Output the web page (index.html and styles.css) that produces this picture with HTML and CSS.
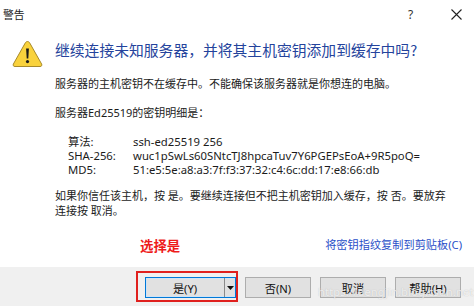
FILE: index.html
```html
<!DOCTYPE html>
<html lang="zh-CN">
<head>
<meta charset="utf-8">
<title>警告</title>
<link rel="stylesheet" href="styles.css">
</head>
<body>
<div class="dialog">
  <div class="titlebar">
    <span class="title">警告</span>
    <span class="tb-help">?</span>
    <span class="tb-close">
      <svg width="11" height="11" viewBox="0 0 11 11"><path d="M0.5 0.5 L10.5 10.5 M10.5 0.5 L0.5 10.5" stroke="#222" stroke-width="1.1" fill="none"/></svg>
    </span>
  </div>
  <div class="content">
    <div class="icon">
      <svg width="31" height="28" viewBox="0 0 31 28">
        <path d="M15.5 1.5 C16.6 1.5 17.2 2.1 17.8 3.1 L29.6 24 C30.3 25.4 29.6 26.5 28 26.5 L3 26.5 C1.4 26.5 0.7 25.4 1.4 24 L13.2 3.1 C13.8 2.1 14.4 1.5 15.5 1.5 Z" fill="#f9d23c" stroke="#a88a2a" stroke-width="1"/>
        <path d="M14.1 8.5 L16.9 8.5 L16.3 18.5 L14.7 18.5 Z" fill="#1a1a1a"/>
        <circle cx="15.5" cy="21.6" r="1.6" fill="#1a1a1a"/>
      </svg>
    </div>
    <div class="text">
      <div class="heading">继续连接未知服务器，并将其主机密钥添加到缓存中吗?</div>
      <div class="line l1">服务器的主机密钥不在缓存中。不能确保该服务器就是你想连的电脑。</div>
      <div class="line l2">服务器Ed25519的密钥明细是：</div>
      <div class="details">
        <span>算法:</span><span>ssh-ed25519 256</span>
        <span>SHA-256:</span><span>wuc1pSwLs60SNtcTJ8hpcaTuv7Y6PGEPsEoA+9R5poQ=</span>
        <span>MD5:</span><span>51:e5:5e:a8:a3:7f:f3:37:32:c4:6c:dd:17:e8:66:db</span>
      </div>
      <div class="para">如果你信任该主机，按 是。要继续连接但不把主机密钥加入缓存，按 否。要放弃<br>连接按 取消。</div>
    </div>
  </div>
  <div class="footer-row">
    <span class="note">选择是</span>
    <span class="link">将密钥指纹复制到剪贴板(C)</span>
  </div>
  <div class="buttonbar">
    <div class="btn btn-yes">
      <span class="btn-main">是(Y)</span>
      <span class="btn-drop">
        <svg width="7" height="4" viewBox="0 0 7 4"><path d="M0 0 L7 0 L3.5 4 Z" fill="#111"/></svg>
      </span>
      <span class="redbox"></span>
    </div>
    <div class="btn">否(N)</div>
    <div class="btn">取消</div>
    <div class="btn">帮助(H)</div>
    <span class="watermark">https://dengjin.blog.csdn.net</span>
  </div>
</div>
</body>
</html>
```

FILE: styles.css
```css
html, body {
  margin: 0;
  padding: 0;
  background: #ffffff;
}
body {
  width: 474px;
  height: 308px;
  overflow: hidden;
  font-family: "Noto Sans", "Noto Sans CJK SC", sans-serif;
  font-size: 11px;
  color: #1b1b1b;
}
.dialog {
  width: 474px;
  height: 308px;
  display: flex;
  flex-direction: column;
}
.titlebar {
  height: 28px;
  display: flex;
  align-items: center;
  position: relative;
}
.title {
  margin-left: 3px;
  font-size: 10.8px;
  color: #222;
  flex: 1;
}
.tb-help {
  font-size: 12px;
  color: #333;
  width: 10px;
  margin-right: 33px;
}
.tb-close {
  display: flex;
  width: 11px;
  margin-right: 12px;
}
.content {
  display: flex;
}
.icon {
  width: 55px;
  flex: none;
  padding-left: 12px;
  padding-top: 12px;
  box-sizing: border-box;
}
.text {
  flex: 1;
}
.heading {
  margin-top: 12px;
  line-height: 20px;
  height: 20px;
  font-size: 14.8px;
  color: #24439c;
  font-family: "Noto Sans CJK SC", sans-serif;
  white-space: nowrap;
}
.line {
  line-height: 15px;
  white-space: nowrap;
}
.l1 { margin-top: 16px; }
.l2 { margin-top: 14px; }
.details {
  margin-top: 15px;
  margin-left: 13px;
  display: grid;
  grid-template-columns: 65px auto;
  line-height: 14px;
  font-size: 11.3px;
  white-space: nowrap;
}
.para {
  margin-top: 11px;
  line-height: 15px;
  white-space: nowrap;
}
.footer-row {
  margin-top: 18px;
  height: 18px;
  line-height: 18px;
  display: flex;
  align-items: center;
  padding-left: 140px;
  padding-right: 12px;
}
.note {
  color: #ee1c1c;
  font-weight: bold;
  font-size: 13.4px;
  font-family: "Noto Sans CJK SC", sans-serif;
  flex: 1;
}
.link {
  color: #2a4fc8;
  font-size: 11.2px;
}
.buttonbar {
  margin-top: 13px;
  height: 39px;
  background: #f0f0f0;
  display: flex;
  justify-content: flex-end;
  align-items: flex-start;
  padding: 10px 13px 0 0;
  box-sizing: border-box;
  gap: 9px;
  position: relative;
}
.btn {
  width: 66px;
  height: 21px;
  box-sizing: border-box;
  border: 1px solid #adadad;
  background: #e1e1e1;
  display: flex;
  align-items: center;
  justify-content: center;
  font-size: 11.2px;
  color: #111;
}
.btn-yes {
  width: 91px;
  border: 1px solid #0078d7;
  justify-content: flex-start;
  position: relative;
  box-shadow: inset 0 0 0 1px #cfe3f5;
}
.btn-main {
  width: 78px;
  text-align: center;
}
.btn-drop {
  height: 100%;
  flex: 1;
  border-left: 1px solid #8a8a8a;
  display: flex;
  align-items: center;
  justify-content: center;
}
.redbox {
  position: absolute;
  left: -10px;
  top: -7px;
  width: 102px;
  height: 31px;
  border: 2px solid #e0201e;
  box-sizing: border-box;
}
.watermark {
  position: absolute;
  left: 318px;
  top: 17px;
  font-size: 11px;
  color: rgba(255, 255, 255, 0.75);
  text-shadow: 0 0 1px rgba(150, 150, 150, 0.6);
  letter-spacing: 0.2px;
  white-space: nowrap;
}
```
